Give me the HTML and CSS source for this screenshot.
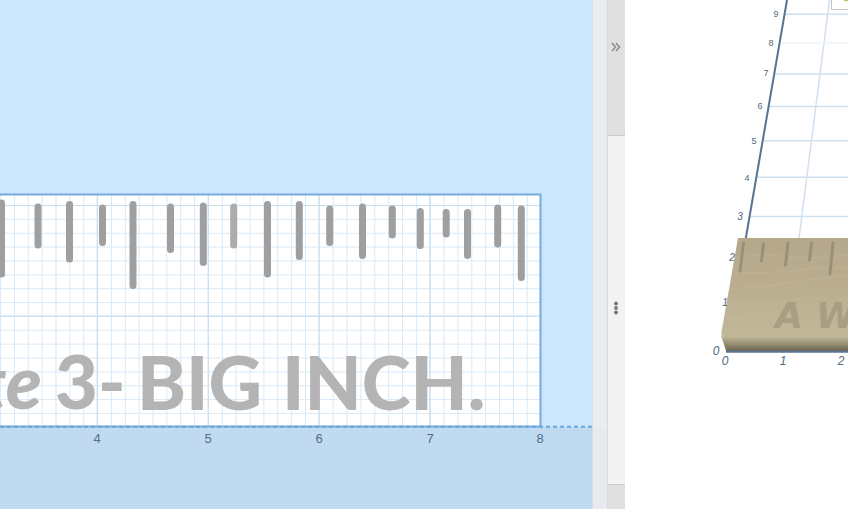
FILE: index.html
```html
<!DOCTYPE html>
<html lang="en">
  <head>
    <meta charset="UTF-8" />
    <meta name="viewport" content="width=device-width, initial-scale=1.0" />
    <title>Ruler design</title>
    <link rel="stylesheet" href="styles.css">
  </head>
  <body>
    <main class="workspace">
      <section class="design-pane" aria-label="Design">
        <svg class="drawing" viewBox="0 0 592 509" preserveAspectRatio="xMaxYMid slice">
          <defs>
            <pattern id="minor" x="540.6" y="426.8" width="13.86" height="13.86" patternUnits="userSpaceOnUse">
              <path class="minor-line" d="M0 .5H13.86M.5 0V13.86" />
            </pattern>
          </defs>
          <rect class="below-origin" x="0" y="427" width="592" height="82" />

          <rect class="material" x="-4" y="194.5" width="544.5" height="232" />
          <rect fill="url(#minor)" x="0" y="195" width="540" height="231" />
          <path class="major-line" d="M0 205.5H540M0 316.2H540M97.2 195V426M208.2 195V426M319 195V426M429.8 195V426" />
          <path class="material-edge" d="M0 194.5H540.5V426.5H0" />
          <path class="origin-line" d="M0 426.8H592" />

          <!-- ruler ticks -->
          <g class="ticks">
            <path d="M1.5 203V274M38 207V245M69.5 204.500V259M102.500 208V242.500M133 204.500V285.500M170.500 207V249.500M203.300 206V262.500M267.500 204.500V274M299.300 204.500V256.500M329.700 209V242.500M362.500 207V255.500M392.300 209V235M420.300 211.500V245.500M446.200 212.500V234M467.500 212.500V255.500M497.700 208V244M521.300 209V277.500" />
            <path class="light-tick" d="M233.700 207V245" />
          </g>

          <g class="lettering">
            <text class="slanted" x="42" y="409" text-anchor="end">te</text>
            <text x="55" y="409">3-</text>
            <text x="137" y="410">BIG</text>
            <text x="282" y="410">INCH.</text>
          </g>

          <g class="ruler-numbers">
            <text x="97" y="443">4</text>
            <text x="208" y="443">5</text>
            <text x="319" y="443">6</text>
            <text x="430" y="443">7</text>
            <text x="540" y="443">8</text>
          </g>
        </svg>
      </section>

      <div class="gutter"></div>

      <div class="splitter">
        <button class="collapse" type="button" aria-label="Collapse preview">
          <svg width="10" height="10" viewBox="0 0 10 10">
            <path d="M1 1L4.500 5L1 9M5 1L8.500 5L5 9" />
          </svg>
        </button>
        <button class="handle" type="button" aria-label="Resize panes">
          <svg width="6" height="14" viewBox="0 0 6 14">
            <circle cx="3" cy="2.500" r="1.900" />
            <circle cx="3" cy="7" r="1.900" />
            <circle cx="3" cy="11.500" r="1.900" />
          </svg>
        </button>
        <div class="splitter-end"></div>
      </div>

      <section class="preview-pane" aria-label="Preview">
        <svg class="drawing" viewBox="625 0 223 509" preserveAspectRatio="xMinYMid slice">
          <defs>
            <linearGradient id="wood" x1="0" y1="0" x2="0" y2="1">
              <stop offset="0" stop-color="#b5a78a" />
              <stop offset=".5" stop-color="#bbae90" />
              <stop offset="1" stop-color="#c1b899" />
            </linearGradient>
            <linearGradient id="edge" x1="0" y1="0" x2="0" y2="1">
              <stop offset="0" stop-color="#bcb492" />
              <stop offset=".5" stop-color="#928c70" />
              <stop offset="1" stop-color="#625e49" />
            </linearGradient>
          </defs>

          <!-- bed grid -->
          <path class="bed-line" d="M785 14.300H848M775 74H848M769 106.500H848M763 140.800H848M757 177.300H848M750 216.500H848M829.500 0L799 238" />
          <path class="bed-line faint" d="M780 43H848" />
          <path class="bed-axis" d="M787 0L745.500 240" />

          <!-- stock -->
          <path fill="url(#wood)" d="M738 238H848V338H721.500V332Z" />
          <path fill="url(#edge)" d="M721.500 337H848V352H726.500Z" />
          <path class="grain" d="M735 257Q768 254 790 257T848 255M732 272Q770 274 800 270T848 268M729 289Q765 287 794 282T848 276M727 303Q757 306 784 301T848 298M725 319Q765 315 795 320T848 314" />
          <path class="engraving" d="M743.500 243L740 271M763.500 244L761.500 261M788 243L785.500 265M811.500 243L809.500 260M833 243L830 274" />
          <text class="engraved-text" x="775" y="328">A</text>
          <text class="engraved-text" x="816" y="328">W</text>
          <path class="bed-axis" d="M726 351.800H848" />

          <g class="bed-numbers far">
            <text x="776" y="17">9</text>
            <text x="771" y="46">8</text>
            <text x="766" y="76">7</text>
            <text x="760" y="109">6</text>
            <text x="754" y="144">5</text>
            <text x="747" y="181">4</text>
          </g>
          <g class="bed-numbers">
            <text x="740" y="220">3</text>
            <text x="732" y="261">2</text>
            <text x="725" y="306">1</text>
          </g>
          <g class="bed-numbers near">
            <text x="716" y="355">0</text>
            <text x="725" y="365">0</text>
            <text x="783" y="365">1</text>
            <text x="841" y="365">2</text>
          </g>

          <!-- corner of the material swatch -->
          <path class="swatch" d="M831.500 -2V9.500H850V-2Z" />
          <path class="swatch-fill" d="M844 0H848V1.200H844Z" />
        </svg>
      </section>
    </main>
  </body>
</html>
```
FILE: styles.css
```css
* {
  margin: 0;
  padding: 0;
  box-sizing: border-box;
}

body {
  background-color: white;
  font-family: "Liberation Sans", Arial, sans-serif;
  overflow: hidden;
}

.workspace {
  display: grid;
  grid-template-columns: minmax(0, 592fr) 15px 18px minmax(0, 223fr);
  height: 100vh;
}

.drawing {
  display: block;
  width: 100%;
  height: 100%;
}

.design-pane {
  background-color: #cce6fe;
  min-height: 0;
}

.below-origin {
  fill: #c0daf1;
}

.material {
  fill: white;
}

.minor-line {
  fill: none;
  stroke: #d9e9f6;
  stroke-width: 1;
}

.major-line {
  fill: none;
  stroke: #c9dff0;
  stroke-width: 1.2;
}

.material-edge {
  fill: none;
  stroke: #75acdc;
  stroke-width: 2;
}

.origin-line {
  fill: none;
  stroke: #6ba5d8;
  stroke-width: 2;
  stroke-dasharray: 4 3;
}

.ticks {
  fill: none;
  stroke: #9f9f9f;
  stroke-width: 7;
  stroke-linecap: round;
}

.ticks .light-tick {
  stroke: #acacac;
}

.lettering {
  font-family: Lato, sans-serif;
  font-size: 74px;
  font-weight: 900;
  fill: #b4b4b4;
}

.slanted {
  font-style: italic;
}

.ruler-numbers {
  font-size: 13px;
  text-anchor: middle;
  fill: #4f6f8c;
}

.gutter {
  background: linear-gradient(#e9edf0 84%, #e9eaef 84%);
  border-left: 1px solid #d9dde0;
}

.splitter {
  display: flex;
  flex-direction: column;
  border-left: 1px solid #d9d9d9;
  background-color: #f3f3f3;
}

.splitter button {
  display: flex;
  align-items: center;
  justify-content: center;
  padding-right: 1px;
  border: 0;
  cursor: pointer;
}

.splitter .collapse {
  height: 136px;
  padding-bottom: 42px;
  background-color: #e0e0e0;
  border-bottom: 1px solid #c9c9c9;
}

.collapse path {
  fill: none;
  stroke: #8d8d8d;
  stroke-width: 1.5;
}

.splitter .handle {
  flex: 1;
  padding-bottom: 4px;
  background-color: #f3f3f3;
}

.handle circle {
  fill: #777777;
}

.splitter-end {
  height: 25px;
  background-color: #e0e0e0;
  border-top: 1px solid #c9c9c9;
}

.preview-pane {
  background-color: white;
  min-height: 0;
}

.bed-line {
  fill: none;
  stroke: #cfe1f0;
  stroke-width: 1.5;
}

.faint {
  stroke: #edf4fa;
}

.bed-axis {
  fill: none;
  stroke: #577593;
  stroke-width: 2;
}

.grain {
  fill: none;
  stroke: #c8b99a;
  stroke-width: 1.5;
  opacity: 0.35;
}

.engraving {
  fill: none;
  stroke: #9c8f77;
  stroke-width: 3;
  stroke-linecap: round;
}

.engraved-text {
  font-family: "DejaVu Sans", sans-serif;
  font-size: 36px;
  font-weight: 700;
  font-style: italic;
  fill: #a99d82;
}

.bed-numbers {
  font-size: 10px;
  font-style: italic;
  text-anchor: middle;
  fill: #4f6880;
}

.far {
  font-size: 9px;
  font-style: normal;
}

.near {
  font-size: 12px;
}

.swatch {
  fill: white;
  stroke: #c4c4c4;
  stroke-width: 1;
}

.swatch-fill {
  fill: #c9b96a;
}
```
